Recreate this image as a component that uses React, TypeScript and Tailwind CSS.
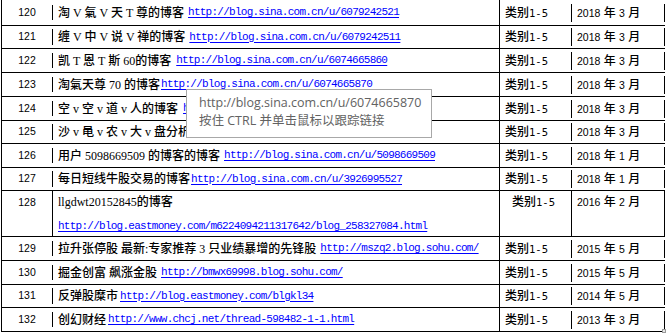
import React from "react";

type Row = {
  n: string;
  title: string;
  url: string;
  ml: string;
  h: string;
  y: string;
  m: string;
};

const rows: Row[] = [
  { n: "120", title: "淘 V 氣 V 天 T 尊的博客", url: "http://blog.sina.com.cn/u/6079242521", ml: "ml-[4px]", h: "h-[26px]", y: "2018", m: "3" },
  { n: "121", title: "缠 V 中 V 说 V 禅的博客", url: "http://blog.sina.com.cn/u/6079242511", ml: "ml-[4px]", h: "h-[23px]", y: "2018", m: "3" },
  { n: "122", title: "凯 T 恩 T 斯 60的博客", url: "http://blog.sina.com.cn/u/6074665860", ml: "ml-[5px]", h: "h-[24px]", y: "2018", m: "3" },
  { n: "123", title: "淘氣天尊 70 的博客", url: "http://blog.sina.com.cn/u/6074665870", ml: "ml-[1px]", h: "h-[24px]", y: "2018", m: "3" },
  { n: "124", title: "空 v 空 v 道 v 人的博客", url: "http://blog.sina.com.cn/u/6074665870", ml: "ml-[5px]", h: "h-[24px]", y: "2018", m: "3" },
  { n: "125", title: "沙 v 黾 v 农 v 大 v 盘分析", url: "http://blog.sina.com.cn/u/56398270013827", ml: "ml-[4px]", h: "h-[23px]", y: "2018", m: "3" },
  { n: "126", title: "用户 5098669509 的博客的博客", url: "http://blog.sina.com.cn/u/5098669509", ml: "ml-[4px]", h: "h-[24px]", y: "2018", m: "1" },
  { n: "127", title: "每日短线牛股交易的博客", url: "http://blog.sina.com.cn/u/3926995527", ml: "ml-[1px]", h: "h-[23px]", y: "2018", m: "1" },
  { n: "129", title: "拉升张停股 最新:专家推荐 3 只业绩暴增的先锋股", url: "http://mszq2.blog.sohu.com/", ml: "ml-[4px]", h: "h-[24px]", y: "2015", m: "5" },
  { n: "130", title: "掘金创富 飙涨金股", url: "http://bmwx69998.blog.sohu.com/", ml: "ml-[4px]", h: "h-[24px]", y: "2015", m: "5" },
  { n: "131", title: "反弹股糜市", url: "http://blog.eastmoney.com/blgkl34", ml: "ml-[2px]", h: "h-[23px]", y: "2014", m: "5" },
  { n: "132", title: "创幻财经", url: "http://www.chcj.net/thread-598482-1-1.html", ml: "ml-[2px]", h: "h-[24px]", y: "2013", m: "3" },
];

const serifCjk = "font-['Liberation_Serif','Noto_Sans_CJK_SC',serif] font-medium";
const sansCjk = "font-['Liberation_Sans','Noto_Sans_CJK_SC',sans-serif] font-medium";

function Link({ url, ml }: { url: string; ml: string }) {
  return (
    <span
      className={`${ml} whitespace-nowrap font-['Liberation_Mono',monospace] font-normal text-[11px] tracking-[-0.74px] text-[#0000ff] underline underline-offset-[2px]`}
    >
      {url}
    </span>
  );
}

function Num({ n }: { n: string }) {
  return (
    <div className="border-r border-black flex justify-center font-['Liberation_Sans',sans-serif] text-[10.5px] text-black">
      {n}
    </div>
  );
}

function Cat({ extra }: { extra?: string }) {
  return (
    <div className={`border-r border-black ${extra ?? "pl-[5px]"} ${sansCjk} text-[12px] text-black whitespace-nowrap`}>
      类别<span className="font-['DejaVu_Sans_Mono',monospace] font-normal text-[10.5px]">1-5</span>
    </div>
  );
}

function DateCell({ y, m }: { y: string; m: string }) {
  return (
    <div className={`border-r border-black pl-[5px] ${sansCjk} text-[12px] text-black whitespace-nowrap`}>
      <span className="text-[10.5px] font-normal">{y}</span> 年 <span className="text-[10.5px] font-normal">{m}</span> 月
    </div>
  );
}

function TableRow({ r }: { r: Row }) {
  return (
    <div className={`grid grid-cols-[51px_447px_72px_93px] items-center border-l border-b border-black ${r.h}`}>
      <Num n={r.n} />
      <div className={`border-r border-black pl-[5px] ${serifCjk} text-[12px] text-black whitespace-nowrap overflow-hidden flex items-center h-full`}>
        <span>{r.title}</span>
        <Link url={r.url} ml={r.ml} />
      </div>
      <Cat />
      <DateCell y={r.y} m={r.m} />
    </div>
  );
}

export default function App() {
  const first = rows.slice(0, 8);
  const rest = rows.slice(8);
  return (
    <div className="relative w-[666px] h-[333px] overflow-hidden bg-white">
      <div className="-mt-[1px] ml-[1px] w-[664px] border-t border-black">
        {first.map((r) => (
          <TableRow key={r.n} r={r} />
        ))}
        <div className="grid grid-cols-[51px_447px_72px_93px] items-stretch border-l border-b border-black h-[46px] leading-[23px]">
          <div className="border-r border-black flex justify-center font-['Liberation_Sans',sans-serif] text-[10.5px] text-black">
            128
          </div>
          <div className={`border-r border-black pl-[5px] ${serifCjk} text-[12px] text-black whitespace-nowrap flex flex-col`}>
            <span>llgdwt20152845的博客</span>
            <span className="leading-[22px]">
              <Link url="http://blog.eastmoney.com/m6224094211317642/blog_258327084.html" ml="ml-0" />
            </span>
          </div>
          <Cat extra="pl-[12px]" />
          <DateCell y="2016" m="2" />
        </div>
        {rest.map((r) => (
          <TableRow key={r.n} r={r} />
        ))}
      </div>

      <div className="absolute left-[186px] top-[89px] w-[246px] h-[49px] border border-[#a8a8a8] bg-white pl-[12px] pt-[4px] font-['Open_Sans','Noto_Sans_CJK_SC',sans-serif] text-[12.5px] leading-[18px] text-[#626262] whitespace-nowrap overflow-hidden">
        <div>http://blog.sina.com.cn/u/6074665870</div>
        <div>按住 CTRL 并单击鼠标以跟踪链接</div>
      </div>

      <div className="absolute left-[662px] top-[329px] w-[4px] h-[4px] border border-[#9a9a9a] bg-[#e8e8e8]" />
    </div>
  );
}
